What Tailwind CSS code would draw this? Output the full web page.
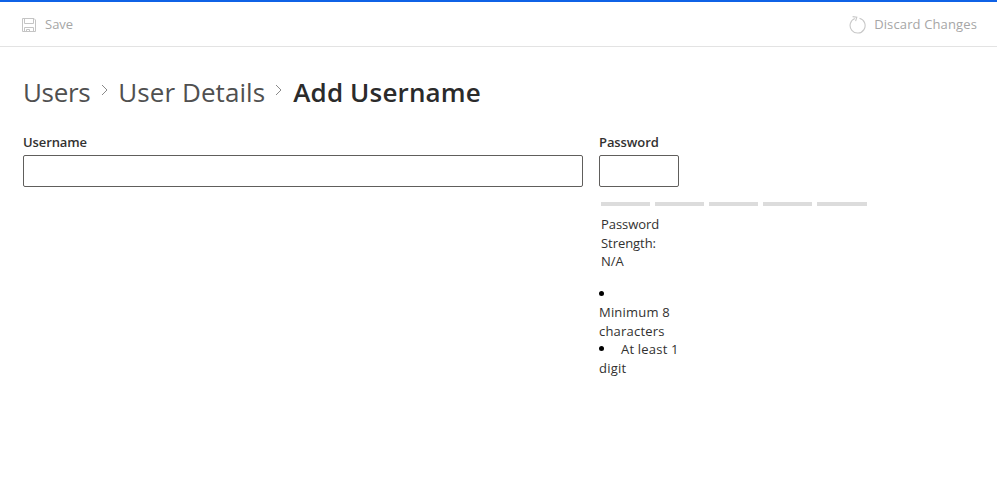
<!doctype html>
<html><head><meta charset="utf-8"><script src="https://cdn.jsdelivr.net/npm/@tailwindcss/browser@4"></script></head>
<body class="bg-white font-['Open_Sans',sans-serif] text-[#323130] h-[492px] w-[997px] overflow-hidden">
<div class="h-[2px] bg-[#0f62e6]"></div>
<div class="h-[45px] border-b border-[#e3e3e3] flex items-center justify-between pl-[22px] pr-[20px]">
  <div class="flex items-center gap-[9px] text-[#a6a6a6] text-[13px] tracking-[0px] pt-[1px]">
    <svg width="14" height="14" viewBox="0 0 14 14" fill="none" stroke="#c4c4c4" stroke-width="1"><path d="M.5.5h11.5l1.500 1.500v11.500h-13z"/><path d="M2.500.5v5h9v-5M2.500 13.500v-4h9v4M4.500 13.500v-2h3v2"/></svg>
    <span>Save</span>
  </div>
  <div class="flex items-center gap-[8px] text-[#a6a6a6] text-[13px] tracking-[0.13px] pt-[1px]">
    <svg width="17" height="18" viewBox="0 0 17 18" fill="none" stroke="#c8c8c8" stroke-width="1.1"><path d="M10.500 2.300a7.500 7.500 0 1 1-4.700.3"/><path d="M3.600.6l4.200.6-1.200 4"/></svg>
    <span>Discard Changes</span>
  </div>
</div>
<div class="pl-[23px] pt-[24px] flex items-center h-[42px] box-content text-[26px] leading-[42px]">
  <span class="text-[#505050] tracking-[-0.35px]">Users</span>
  <svg class="ml-[11px] mr-[10px] mb-[5px]" width="7" height="12" viewBox="0 0 7 12" fill="none" stroke="#8a8a8a"><path d="M1 1l5 5-5 5"/></svg>
  <span class="text-[#505050] tracking-[0.08px]">User Details</span>
  <svg class="ml-[10px] mr-[11px] mb-[5px]" width="7" height="12" viewBox="0 0 7 12" fill="none" stroke="#8a8a8a"><path d="M1 1l5 5-5 5"/></svg>
  <span class="font-semibold text-[#2b2b2b] tracking-[0.15px]">Add Username</span>
</div>
<div class="flex gap-[16px] pl-[23px] pt-[19px]">
  <div class="w-[560px]">
    <label class="block font-semibold text-[13px] leading-[20px] mb-[3px] tracking-[-0.1px]">Username</label>
    <div class="h-[32px] border border-[#605e5c] rounded-[2px]"></div>
  </div>
  <div class="w-[80px]">
    <label class="block font-semibold text-[13px] leading-[20px] mb-[3px] tracking-[-0.1px]">Password</label>
    <div class="h-[32px] border border-[#605e5c] rounded-[2px]"></div>
    <div class="flex gap-[5px] mt-[15px] ml-[2px] w-[266px]">
      <div class="w-[49px] h-[4px] bg-[#dcdcdc]"></div><div class="w-[49px] h-[4px] bg-[#dcdcdc]"></div><div class="w-[49px] h-[4px] bg-[#dcdcdc]"></div><div class="w-[49px] h-[4px] bg-[#dcdcdc]"></div><div class="w-[50px] h-[4px] bg-[#dcdcdc]"></div>
    </div>
    <div class="ml-[2px] mt-[9px] text-[13px] leading-[18.5px] tracking-[-0.05px] w-[70px]">Password Strength: N/A</div>
    <ul class="mt-[14px] text-[13px] leading-[18.5px] tracking-[0.2px]">
      <li class="relative"><span class="block h-[18.5px]"></span><span class="absolute left-[0px] top-[6px] size-[5px] rounded-full bg-black"></span>Minimum 8 characters</li>
      <li class="relative indent-[22px]"><span class="absolute left-[0px] top-[6px] size-[5px] rounded-full bg-black"></span>At least 1 digit</li>
    </ul>
  </div>
</div>
</body></html>
